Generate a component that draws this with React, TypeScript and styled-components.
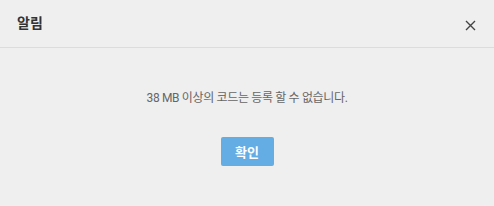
import React from "react";
import styled, { createGlobalStyle } from "styled-components";

const GlobalStyle = createGlobalStyle`
  html, body {
    margin: 0;
    padding: 0;
    background: #efefef;
  }
  body {
    font-family: Roboto, "Noto Sans CJK KR", sans-serif;
  }
`;

const Dialog = styled.div`
  width: 494px;
  height: 206px;
  background: #efefef;
  display: flex;
  flex-direction: column;
`;

const Header = styled.div`
  height: 48px;
  box-sizing: border-box;
  border-bottom: 1px solid #dcdcdc;
  display: flex;
  align-items: center;
  justify-content: space-between;
  padding: 0 17px 0 17px;
`;

const Title = styled.h2`
  margin: 0;
  font-size: 14px;
  font-weight: 700;
  color: #333;
  line-height: 1;
  padding-bottom: 2px;
`;

const CloseButton = styled.button`
  border: 0;
  background: none;
  padding: 0;
  width: 14px;
  height: 14px;
  display: flex;
  align-items: center;
  justify-content: center;
  cursor: pointer;
  margin-top: 4px;
`;

const Body = styled.div`
  display: flex;
  flex-direction: column;
  align-items: center;
  padding-top: 42px;
`;

const Message = styled.p`
  margin: 0;
  font-size: 12px;
  letter-spacing: -0.35px;
  color: #666;
  line-height: 16px;
`;

const ConfirmButton = styled.button`
  margin-top: 31px;
  width: 53px;
  height: 29px;
  border: 0;
  border-radius: 2px;
  background: #64ace4;
  color: #fff;
  font-family: Roboto, "Noto Sans CJK KR", sans-serif;
  font-size: 13px;
  font-weight: 700;
  cursor: pointer;
`;

export default function App() {
  return (
    <>
      <GlobalStyle />
      <Dialog>
        <Header>
          <Title>알림</Title>
          <CloseButton aria-label="닫기">
            <svg width="11" height="11" viewBox="0 0 11 11">
              <path d="M1 1L10 10M10 1L1 10" stroke="#444" strokeWidth="1.4" />
            </svg>
          </CloseButton>
        </Header>
        <Body>
          <Message>38 MB 이상의 코드는 등록 할 수 없습니다.</Message>
          <ConfirmButton>확인</ConfirmButton>
        </Body>
      </Dialog>
    </>
  );
}
